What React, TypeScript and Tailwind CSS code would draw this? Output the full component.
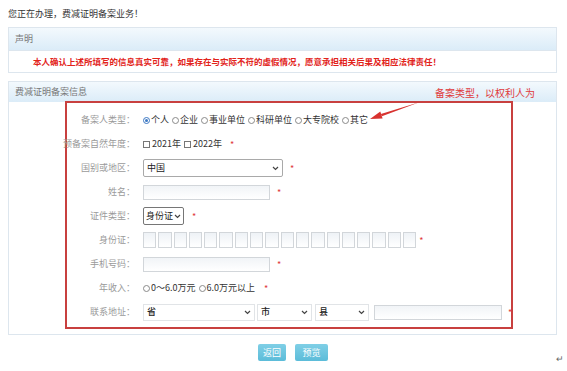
import type { ReactNode } from 'react';

const cjk = { fontFamily: '"Noto Sans CJK SC", "Noto Sans", sans-serif' };

function Row({ label, children }: { label: string; children: ReactNode }) {
  return (
    <div className="flex h-[24px] items-center">
      <div className="flex w-[68px] shrink-0 justify-end">
        <span className="whitespace-nowrap text-[9px] text-[#9a9a9a]">{label}：</span>
      </div>
      <div className="ml-[8px] flex items-center whitespace-nowrap text-[9px] text-[#333]">{children}</div>
    </div>
  );
}

function Star({ className = 'ml-[7px]' }: { className?: string }) {
  return <span className={`${className} text-[9px] leading-none text-[#e0393b]`}>*</span>;
}

function Radio({ checked = false, label }: { checked?: boolean; label: string }) {
  return (
    <span className="mr-[3px] flex items-center whitespace-nowrap">
      <span
        className={`mr-[1px] flex h-[7px] w-[7px] items-center justify-center rounded-full border ${
          checked ? 'border-[#3c78c3]' : 'border-[#8a8a8a]'
        }`}
      >
        {checked && <span className="h-[3px] w-[3px] rounded-full bg-[#3c78c3]" />}
      </span>
      {label}
    </span>
  );
}

function Chevron() {
  return (
    <svg width="7" height="5" viewBox="0 0 7 5" className="shrink-0">
      <path d="M1 1l2.5 2.5L6 1" fill="none" stroke="#444" strokeWidth="1.2" />
    </svg>
  );
}

function Select({ text, className }: { text: string; className: string }) {
  return (
    <div className={`flex items-center justify-between px-[3px] text-[9px] text-[#222] ${className}`}>
      <span className="font-medium">{text}</span>
      <Chevron />
    </div>
  );
}

function TextBox({ className = 'w-[127px]' }: { className?: string }) {
  return <div className={`h-[15px] border border-[#d2d6da] bg-gradient-to-b from-[#f1f4f7] to-white ${className}`} />;
}

export default function App() {
  return (
    <div className="relative h-[371px] w-[567px] overflow-hidden bg-white" style={cjk}>
      <div className="flex h-[27px] items-center px-[8px] text-[9px] text-[#333]">您正在办理，费减证明备案业务！</div>

      <div className="mx-[8px] w-[549px] border border-[#dde6ee]">
        <div className="flex h-[22px] items-center bg-gradient-to-b from-[#f3f9fd] to-[#dbecf8] px-[6px] text-[9px] text-[#777]">
          声明
        </div>
        <div className="flex h-[22px] items-center border-t border-[#dde6ee] pl-[24px] text-[8.5px] font-bold text-[#e2231a]">
          本人确认上述所填写的信息真实可靠，如果存在与实际不符的虚假情况，愿意承担相关后果及相应法律责任！
        </div>
      </div>

      <div className="mx-[8px] mt-[8px] w-[549px] border border-[#dde6ee]">
        <div className="flex h-[20px] items-center justify-between bg-gradient-to-b from-[#f3f9fd] to-[#dbecf8] pl-[6px] pr-[21px]">
          <span className="text-[9px] text-[#777]">费减证明备案信息</span>
          <span className="text-[10px] text-[#e0393b]">备案类型，以权利人为</span>
        </div>
        <div className="pb-[5px] pl-[56px]">
          <div className="-mt-[1px] h-[228px] w-[448px] border-2 border-[#c8403f] pt-[5px]">
            <Row label="备案人类型">
              <Radio checked label="个人" />
              <Radio label="企业" />
              <Radio label="事业单位" />
              <Radio label="科研单位" />
              <Radio label="大专院校" />
              <Radio label="其它" />
            </Row>
            <Row label="预备案自然年度">
              <span className="mr-[2px] h-[7px] w-[7px] border border-[#777]" />
              <span>2021年</span>
              <span className="ml-[3px] mr-[2px] h-[7px] w-[7px] border border-[#777]" />
              <span>2022年</span>
              <Star className="ml-[8px]" />
            </Row>
            <Row label="国别或地区">
              <div className="flex h-[18px] w-[140px] items-center justify-between rounded-[2px] border border-[#a9a9a9] px-[3px] text-[9px] text-[#222]">
                <span>中国</span>
                <Chevron />
              </div>
              <Star />
            </Row>
            <Row label="姓名">
              <TextBox />
              <Star />
            </Row>
            <Row label="证件类型">
              <div className="flex h-[18px] w-[41px] items-center justify-between rounded-[2px] border border-[#767676] px-[2px] text-[9px] text-[#222]">
                <span className="whitespace-nowrap">身份证</span>
                <Chevron />
              </div>
              <Star className="ml-[8px]" />
            </Row>
            <Row label="身份证">
              <div className="flex gap-[2px]">
                {Array.from({ length: 18 }).map((_, i) => (
                  <div key={i} className="h-[16px] w-[13.3px] border border-[#d2d6da] bg-gradient-to-b from-[#eef2f6] to-white" />
                ))}
              </div>
              <Star className="ml-[3px]" />
            </Row>
            <Row label="手机号码">
              <TextBox />
              <Star />
            </Row>
            <Row label="年收入">
              <Radio label="0～6.0万元" />
              <Radio label="6.0万元以上" />
              <Star className="ml-[6px]" />
            </Row>
            <Row label="联系地址">
              <Select text="省" className="h-[17px] w-[112px] border border-[#e1e4e7]" />
              <Select text="市" className="ml-[2px] h-[17px] w-[55px] border border-[#e1e4e7]" />
              <Select text="县" className="ml-[3px] h-[17px] w-[54px] border border-[#e1e4e7]" />
              <TextBox className="ml-[5px] w-[128px]" />
              <Star className="ml-[6px]" />
            </Row>
          </div>
        </div>
      </div>

      <div className="mt-[5px] flex items-center">
        <div className="ml-[258px] flex gap-[9px]">
          <button className="h-[17px] w-[28px] rounded-[2px] bg-gradient-to-b from-[#7fcfe6] to-[#5bbcd9] text-[9px] text-white">返回</button>
          <button className="h-[17px] w-[33px] rounded-[2px] bg-gradient-to-b from-[#7fcfe6] to-[#5bbcd9] text-[9px] text-white">预览</button>
        </div>
        <span className="ml-auto mr-[3px] mt-[12px] text-[9px] text-[#666]">↵</span>
      </div>

      <svg className="pointer-events-none absolute left-[365px] top-[99px]" width="60" height="25" viewBox="0 0 60 25">
        <path d="M55 3 L16.9 17.2 L15.9 14.9 Z" fill="#d8322f" />
        <path d="M5 20 L15.3 12.6 L17.6 19.4 Z" fill="#d8322f" />
      </svg>
    </div>
  );
}
